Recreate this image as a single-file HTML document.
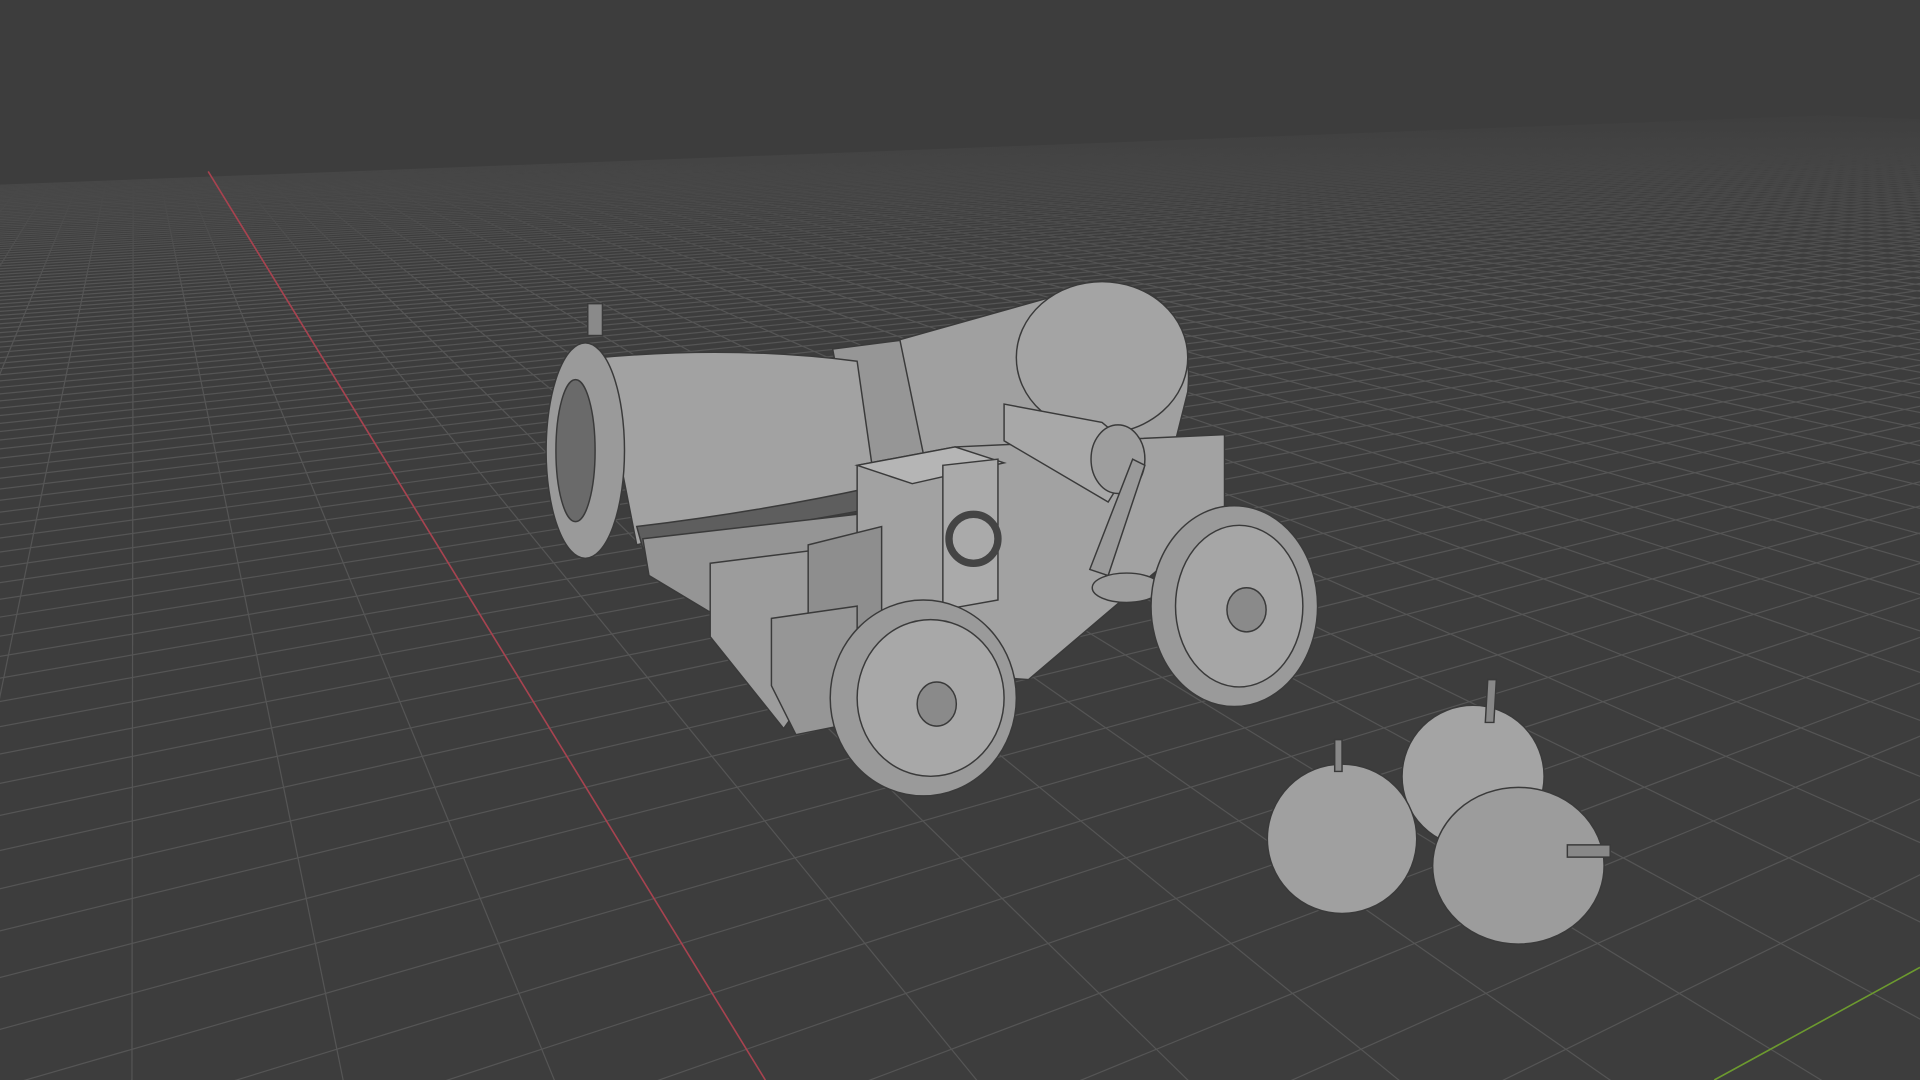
<!DOCTYPE html>
<html><head><meta charset="utf-8"><style>
html,body{margin:0;padding:0;background:#3d3d3d;overflow:hidden;width:1920px;height:1080px}
svg{display:block;overflow:hidden}
</style></head><body>
<svg id="s" width="1920" height="1080" viewBox="0 0 1568 882" preserveAspectRatio="none">
<defs><linearGradient id="fade" x1="0" y1="0" x2="0" y2="1"><stop offset="0.35" stop-color="#3d3d3d"/><stop offset="1" stop-color="#3d3d3d" stop-opacity="0"/></linearGradient></defs>
<rect width="1568" height="882" fill="#3d3d3d"/>
<g id="grid" stroke="#555555" stroke-width="1" fill="none"></g>
<rect width="1568" height="240" fill="url(#fade)"/>
<line x1="170" y1="140" x2="625" y2="882" stroke="#a8424f" stroke-width="1.3"/>
<line x1="1400" y1="882" x2="1568" y2="790" stroke="#6c9a2e" stroke-width="1.3"/>
<g stroke="#3a3a3a" stroke-width="1.2" fill="#9b9b9b">
<path d="M690 290 L850 245 Q900 230 940 240 Q975 265 970 320 L960 360 L720 395 Z" fill="#a0a0a0"/>
<ellipse cx="900" cy="292" rx="70" ry="62" fill="#a4a4a4"/>
<path d="M680 285 L735 278 L755 375 L700 392 Z" fill="#969696"/>
<path d="M490 292 Q600 282 700 295 L715 400 Q620 420 520 445 Z" fill="#a2a2a2"/>
<path d="M520 430 Q620 418 712 398 L715 415 Q620 432 525 448 Z" fill="#5e5e5e"/>
<ellipse cx="478" cy="368" rx="32" ry="88" fill="#9a9a9a"/>
<ellipse cx="470" cy="368" rx="16" ry="58" fill="#6a6a6a"/>
<rect x="480" y="248" width="12" height="26" fill="#8a8a8a"/>
<path d="M525 440 L700 420 L700 500 L580 500 L530 470 Z" fill="#959595"/>
<path d="M580 460 L700 445 L700 510 L640 595 L580 520 Z" fill="#9c9c9c"/>
<path d="M700 380 L780 365 L1000 355 L1000 420 L940 470 L840 555 L700 545 Z" fill="#a2a2a2"/>
<path d="M700 380 L780 365 L820 378 L745 395 Z" fill="#b5b5b5"/>
<path d="M660 445 L720 430 L720 545 L660 560 Z" fill="#8e8e8e"/>
<path d="M630 505 L700 495 L700 590 L650 600 L630 560 Z" fill="#969696"/>
<path d="M770 380 L815 375 L815 490 L770 498 Z" fill="#aaaaaa"/>
<path d="M820 330 L900 345 L930 370 L905 410 L820 360 Z" fill="#a8a8a8"/>
<ellipse cx="913" cy="375" rx="22" ry="28" fill="#9e9e9e"/>
<path d="M925 375 L935 380 L905 470 L890 465 Z" fill="#999"/>
<ellipse cx="920" cy="480" rx="28" ry="12" fill="#9e9e9e"/>
<circle cx="795" cy="440" r="20" fill="none" stroke="#444" stroke-width="6"/>
<ellipse cx="1008" cy="495" rx="68" ry="82" fill="#9a9a9a"/>
<ellipse cx="1012" cy="495" rx="52" ry="66" fill="#a6a6a6"/>
<ellipse cx="1018" cy="498" rx="16" ry="18" fill="#8a8a8a"/>
<ellipse cx="754" cy="570" rx="76" ry="80" fill="#9a9a9a"/>
<ellipse cx="760" cy="570" rx="60" ry="64" fill="#a8a8a8"/>
<ellipse cx="765" cy="575" rx="16" ry="18" fill="#8a8a8a"/>
<circle cx="1203" cy="634" r="58" fill="#a4a4a4"/>
<circle cx="1096" cy="685" r="61" fill="#a0a0a0"/>
<ellipse cx="1240" cy="707" rx="70" ry="64" fill="#9c9c9c"/>
<path d="M1215 555 L1222 555 L1220 590 L1213 590 Z" fill="#888"/>
<path d="M1090 604 L1096 604 L1096 630 L1090 630 Z" fill="#888"/>
<path d="M1280 690 L1315 690 L1315 700 L1280 700 Z" fill="#888"/>
</g>
</svg>
<script>
(function(){
var g=document.getElementById('grid'),a=0.0042,b=0.0042;
var VX=[109,40],VY=[2937,40],O=[820,1200];
function P(X,Y){var w=1+a*X+b*Y;return [(a*X*VX[0]+b*Y*VY[0]+O[0])/w,(a*X*VX[1]+b*Y*VY[1]+O[1])/w];}
var s='',N=2400,step=20,W=0.08;
for(var k=-N;k<=N;k+=step){
 var y0=-N,y1=N,lim=(W-1-a*k)/b; if(y0<lim)y0=lim;
 if(y1>y0){var p=P(k,y0),q=P(k,y1);s+='<line x1="'+p[0].toFixed(1)+'" y1="'+p[1].toFixed(1)+'" x2="'+q[0].toFixed(1)+'" y2="'+q[1].toFixed(1)+'"/>';}
 var x0=-N,x1=N;lim=(W-1-b*k)/a; if(x0<lim)x0=lim;
 if(x1>x0){var p=P(x0,k),q=P(x1,k);s+='<line x1="'+p[0].toFixed(1)+'" y1="'+p[1].toFixed(1)+'" x2="'+q[0].toFixed(1)+'" y2="'+q[1].toFixed(1)+'"/>';}
}
g.innerHTML=s;
})();
</script>
</body></html>
